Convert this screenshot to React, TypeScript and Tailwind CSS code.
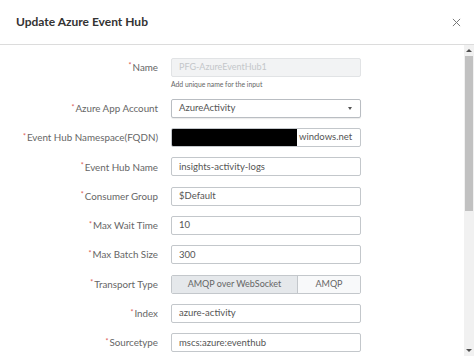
import React from "react";

type Row = { label: string; value?: string; kind?: "text" | "select" | "masked" | "toggle" | "disabled"; help?: string };

const rows: Row[] = [
  { label: "Name", value: "PFG-AzureEventHub1", kind: "disabled", help: "Add unique name for the input" },
  { label: "Azure App Account", value: "AzureActivity", kind: "select" },
  { label: "Event Hub Namespace(FQDN)", value: "windows.net", kind: "masked" },
  { label: "Event Hub Name", value: "insights-activity-logs" },
  { label: "Consumer Group", value: "$Default" },
  { label: "Max Wait Time", value: "10" },
  { label: "Max Batch Size", value: "300" },
  { label: "Transport Type", kind: "toggle" },
  { label: "Index", value: "azure-activity" },
  { label: "Sourcetype", value: "mscs:azure:eventhub" },
];

const Field = ({ row }: { row: Row }) => {
  const base = "w-[190px] h-[19px] rounded-[2px] border text-[9.5px] flex items-center";
  if (row.kind === "disabled") {
    return (
      <div className={`${base} border-[#e1e3e5] bg-[#f2f3f4] px-[7px] text-[#c4c7ca] text-[9px]`}>{row.value}</div>
    );
  }
  if (row.kind === "select") {
    return (
      <div className={`${base} border-[#b9bdc2] bg-white px-[7px] text-[#555] justify-between shadow-[0_1px_1px_rgba(0,0,0,0.08)]`}>
        <span>{row.value}</span>
        <span className="mr-[1px] w-0 h-0 border-l-[2.5px] border-r-[2.5px] border-t-[3px] border-l-transparent border-r-transparent border-t-[#555]" />
      </div>
    );
  }
  if (row.kind === "masked") {
    return (
      <div className={`${base} border-[#c3c7cb] bg-white text-[#555] overflow-hidden`}>
        <div className="w-[125px] h-full bg-black" />
        <span className="pl-[2px]">{row.value}</span>
      </div>
    );
  }
  if (row.kind === "toggle") {
    return (
      <div className={`${base} border-[#c3c7cb] overflow-hidden text-[#666] text-[9px]`}>
        <div className="w-[126px] h-full bg-[#e5e8eb] border-r border-[#c3c7cb] flex items-center justify-center">
          AMQP over WebSocket
        </div>
        <div className="flex-1 h-full bg-[#f8f9fa] flex items-center justify-center">AMQP</div>
      </div>
    );
  }
  return <div className={`${base} border-[#c3c7cb] bg-white px-[7px] text-[#555]`}>{row.value}</div>;
};

export default function App() {
  return (
    <div className="w-[474px] h-[356px] overflow-hidden bg-white flex flex-col font-['Lato','Liberation_Sans',sans-serif]">
      <div className="h-[45px] shrink-0 flex items-center justify-between pl-[16px] pr-[13px] border-b border-[#dcdcdc]">
        <h1 className="text-[12px] font-bold text-[#333]">Update Azure Event Hub</h1>
        <svg width="9" height="9" viewBox="0 0 10 10" className="mt-[1px]">
          <path d="M1 1L9 9M9 1L1 9" stroke="#777" strokeWidth="1.1" />
        </svg>
      </div>
      <div className="flex flex-1 min-h-0">
        <div className="flex-1 pt-[12.5px] flex flex-col gap-[10.3px]">
          {rows.map((row) => (
            <div key={row.label} className="flex items-start">
              <label className="w-[158px] h-[19px] flex items-center justify-end text-[9.8px] text-[#666]">
                <span className="text-[#d9534f] text-[7px] mr-[1px] -mt-[3px]">*</span>
                {row.label}
              </label>
              <div className="ml-[13px] flex flex-col">
                <Field row={row} />
                {row.help && (
                  <div className="mt-[2px] text-[6.8px] leading-[10px] text-[#666]">{row.help}</div>
                )}
              </div>
            </div>
          ))}
        </div>
        <div className="w-[10px] shrink-0 bg-[#f1f1f1] flex flex-col items-center">
          <div className="h-[11px] flex items-center justify-center">
            <span className="w-0 h-0 border-l-[3px] border-r-[3px] border-b-[3px] border-l-transparent border-r-transparent border-b-[#505050]" />
          </div>
          <div className="w-[8px] h-[155px] bg-[#c1c1c1]" />
          <div className="flex-1" />
          <div className="h-[11px] flex items-center justify-center">
            <span className="w-0 h-0 border-l-[3px] border-r-[3px] border-t-[3px] border-l-transparent border-r-transparent border-t-[#505050]" />
          </div>
        </div>
      </div>
    </div>
  );
}
